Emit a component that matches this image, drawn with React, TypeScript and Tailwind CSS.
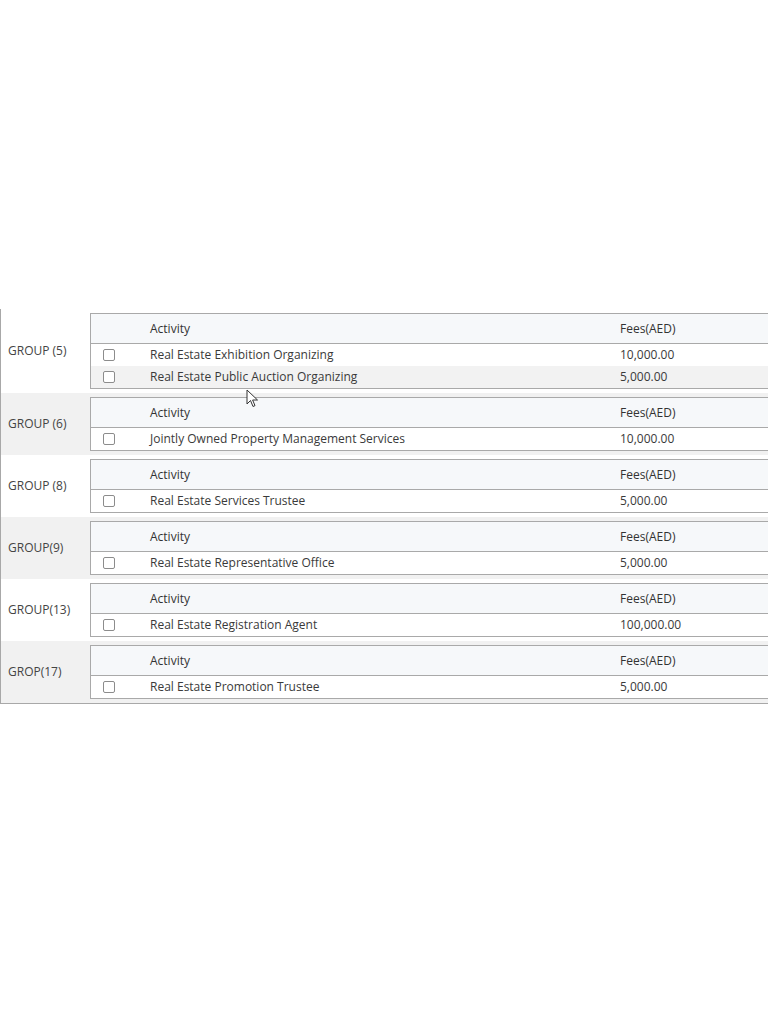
import React from 'react';

type Activity = { name: string; fee: string };
type Group = { label: string; activities: Activity[] };

const groups: Group[] = [
  {
    label: 'GROUP (5)',
    activities: [
      { name: 'Real Estate Exhibition Organizing', fee: '10,000.00' },
      { name: 'Real Estate Public Auction Organizing', fee: '5,000.00' },
    ],
  },
  { label: 'GROUP (6)', activities: [{ name: 'Jointly Owned Property Management Services', fee: '10,000.00' }] },
  { label: 'GROUP (8)', activities: [{ name: 'Real Estate Services Trustee', fee: '5,000.00' }] },
  { label: 'GROUP(9)', activities: [{ name: 'Real Estate Representative Office', fee: '5,000.00' }] },
  { label: 'GROUP(13)', activities: [{ name: 'Real Estate Registration Agent', fee: '100,000.00' }] },
  { label: 'GROP(17)', activities: [{ name: 'Real Estate Promotion Trustee', fee: '5,000.00' }] },
];

const Checkbox = () => (
  <span className="block w-[12px] h-[12px] rounded-[2px] border border-[#8c8c8c] bg-white" />
);

const ActivityTable = ({ activities }: { activities: Activity[] }) => (
  <div className="w-[720px] shrink-0 border border-[#a9a9a9] bg-white">
    {/* header */}
    <div className="grid grid-cols-[59px_470px_1fr] h-[30px] items-center bg-[#f6f8fa] border-b border-[#a9a9a9] text-[12px] text-[#333]">
      <span />
      <span>Activity</span>
      <span>Fees(AED)</span>
    </div>
    {activities.map((a, i) => (
      <div
        key={a.name}
        className={`grid grid-cols-[59px_470px_1fr] h-[22px] items-center text-[12px] text-[#3a3a3a] ${
          i % 2 === 1 ? 'bg-[#f2f2f2]' : 'bg-white'
        }`}
      >
        <span className="pl-[12px]">
          <Checkbox />
        </span>
        <span>{a.name}</span>
        <span>{a.fee}</span>
      </div>
    ))}
  </div>
);

export default function App() {
  return (
    <div
      className="relative w-[768px] h-[1024px] overflow-hidden bg-white"
      style={{ fontFamily: '"Open Sans", "Noto Sans", Arial, sans-serif' }}
    >
      <div className="pt-[309px]">
        <div className="border-l border-b border-[#a8a8a8]">
          {groups.map((g, i) => (
            <div key={g.label} className={`flex items-center py-1 ${i % 2 === 1 ? 'bg-[#f1f1f1]' : 'bg-white'}`}>
              <div className="w-[89px] shrink-0 pl-[7px] text-[12px] text-[#444]">{g.label}</div>
              <ActivityTable activities={g.activities} />
            </div>
          ))}
        </div>
      </div>

      {/* mouse cursor */}
      <svg className="absolute left-[246px] top-[389px]" width="13" height="20" viewBox="0 0 13 20">
        <path d="M1 1 L1 15 L4.5 11.5 L7 17.5 L9 16.6 L6.6 11 L11.5 11 Z" fill="#fff" stroke="#333" strokeWidth="1" strokeLinejoin="round" />
      </svg>
    </div>
  );
}
